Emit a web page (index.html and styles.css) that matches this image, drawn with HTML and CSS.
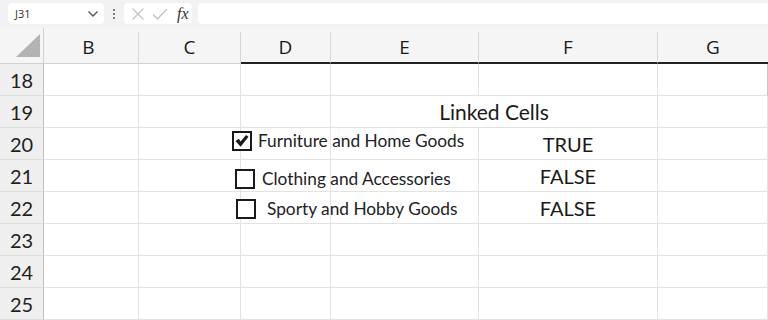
FILE: index.html
```html
<!DOCTYPE html>
<html>
<head>
<meta charset="utf-8">
<link rel="stylesheet" href="styles.css">
</head>
<body>
<div class="topbar">
  <div class="namebox"><span class="ref">J31</span>
    <svg class="chev" width="12" height="8" viewBox="0 0 12 8"><path d="M1.5 1.5 L6 6 L10.5 1.5" fill="none" stroke="#555" stroke-width="1.4"/></svg>
  </div>
  <div class="dots"><span></span><span></span><span></span></div>
  <div class="fbtns">
    <svg width="14" height="14" viewBox="0 0 14 14"><path d="M1.5 1.5 L12.5 12.5 M12.5 1.5 L1.5 12.5" stroke="#c4c4c4" stroke-width="1.3" fill="none"/></svg>
    <svg width="16" height="14" viewBox="0 0 16 14"><path d="M1 7.5 L5.5 12 L15 2" stroke="#c4c4c4" stroke-width="1.3" fill="none"/></svg>
    <span class="fx">fx</span>
  </div>
  <div class="finput"></div>
</div>
<div class="sheet">
  <div class="corner"><svg width="24" height="23" viewBox="0 0 24 23"><path d="M24 0 L24 23 L0 23 Z" fill="#b3b3b3"/></svg></div>
  <div class="ch chb">B</div>
  <div class="ch">C</div>
  <div class="ch sel">D</div>
  <div class="ch sel">E</div>
  <div class="ch sel">F</div>
  <div class="ch sel last">G</div>

  <div class="rh">18</div><div class="c"></div><div class="c"></div><div class="c"></div><div class="c"></div><div class="c"></div><div class="c"></div>
  <div class="rh">19</div><div class="c"></div><div class="c"></div><div class="c"></div><div class="c span2 txt">Linked Cells</div><div class="c"></div>
  <div class="rh">20</div><div class="c"></div><div class="c"></div><div class="c"></div><div class="c"></div><div class="c txt">TRUE</div><div class="c"></div>
  <div class="rh">21</div><div class="c"></div><div class="c"></div><div class="c"></div><div class="c"></div><div class="c txt">FALSE</div><div class="c"></div>
  <div class="rh">22</div><div class="c"></div><div class="c"></div><div class="c"></div><div class="c"></div><div class="c txt">FALSE</div><div class="c"></div>
  <div class="rh">23</div><div class="c"></div><div class="c"></div><div class="c"></div><div class="c"></div><div class="c"></div><div class="c"></div>
  <div class="rh">24</div><div class="c"></div><div class="c"></div><div class="c"></div><div class="c"></div><div class="c"></div><div class="c"></div>
  <div class="rh">25</div><div class="c"></div><div class="c"></div><div class="c"></div><div class="c"></div><div class="c"></div><div class="c"></div>

  <div class="ctrl ctrl1">
    <svg class="box" width="20" height="20" viewBox="0 0 20 20"><rect x="1" y="1" width="18" height="18" fill="#fff" stroke="#1a1a1a" stroke-width="2"/><path d="M3.5 10 L6.8 7.8 L8.6 10.6 L14 4 L16.5 5.8 L8.6 15.8 Z" fill="#1a1a1a"/></svg>
    <span class="lbl">Furniture and Home Goods</span>
  </div>
  <div class="ctrl ctrl2">
    <svg class="box" width="20" height="20" viewBox="0 0 20 20"><rect x="1" y="1" width="18" height="18" fill="#fff" stroke="#1a1a1a" stroke-width="2"/></svg>
    <span class="lbl">Clothing and Accessories</span>
  </div>
  <div class="ctrl ctrl3">
    <svg class="box" width="20" height="20" viewBox="0 0 20 20"><rect x="1" y="1" width="18" height="18" fill="#fff" stroke="#1a1a1a" stroke-width="2"/></svg>
    <span class="lbl">Sporty and Hobby Goods</span>
  </div>
</div>
</body>
</html>
```
FILE: styles.css
```css
html, body {
  margin: 0;
  padding: 0;
  width: 768px;
  height: 320px;
  overflow: hidden;
  background: #f2f2f2;
  font-family: Lato, "Open Sans", sans-serif;
  color: #1f1f1f;
}
.topbar {
  height: 28px;
  display: flex;
  align-items: center;
  padding-left: 8px;
  box-sizing: border-box;
  background: #f2f2f2;
}
.namebox {
  width: 96px;
  height: 21px;
  margin-top: -1px;
  background: #fff;
  border-radius: 4px;
  display: flex;
  align-items: center;
  justify-content: space-between;
  padding: 0 5px 0 7px;
  box-sizing: border-box;
}
.ref {
  font-family: "Open Sans", sans-serif;
  font-size: 11px;
  color: #333;
}
.dots {
  width: 20px;
  display: flex;
  flex-direction: column;
  align-items: center;
  gap: 2px;
}
.dots span {
  width: 2px;
  height: 2px;
  background: #555;
  border-radius: 1px;
}
.fbtns {
  width: 68px;
  height: 21px;
  margin-top: -1px;
  background: #fff;
  border-radius: 4px;
  display: flex;
  align-items: center;
  gap: 7px;
  padding-left: 7px;
  box-sizing: border-box;
}
.fx {
  font-family: "Liberation Serif", serif;
  font-style: italic;
  font-size: 16px;
  color: #333;
  margin-left: 2px;
}
.finput {
  flex: 1;
  height: 21px;
  margin-left: 6px;
  margin-top: -1px;
  background: #fff;
  border-radius: 4px 0 0 4px;
}
.sheet {
  position: relative;
  display: grid;
  grid-template-columns: 44px 95px 102px 90px 148px 179px 110px;
  grid-template-rows: 36px repeat(8, 32px);
  background: #f5f5f5;
}
.corner {
  display: flex;
  align-items: flex-end;
  justify-content: flex-end;
  padding: 0 3px 6px 0;
  border-right: 1px solid #d0d0d0;
  border-bottom: 1px solid #d0d0d0;
}
.ch {
  margin-top: 4px;
  border-right: 1px solid #d6d6d6;
  border-bottom: 1px solid #d0d0d0;
  display: flex;
  align-items: center;
  justify-content: center;
  font-family: "Open Sans", sans-serif;
  font-size: 19px;
  color: #1a1a1a;
  padding-bottom: 2px;
}
.chb { padding-right: 5px; }
.ch.sel {
  border-bottom: 2px solid #222;
  padding-bottom: 1px;
}
.ch.last { border-right: none; }
.rh {
  background: #efefef;
  border-right: 1px solid #c4c4c4;
  border-bottom: 1px solid #dcdcdc;
  display: flex;
  align-items: center;
  justify-content: center;
  font-size: 20px;
  color: #1f1f1f;
}
.c {
  background: #fff;
  border-right: 1px solid #e3e3e3;
  border-bottom: 1px solid #e3e3e3;
}
.c:nth-child(7n) { border-right: 1px solid #c8c8c8; }
.span2 { grid-column: span 2; }
.txt {
  display: flex;
  align-items: center;
  justify-content: center;
  font-size: 20px;
  color: #1a1a1a;
}
.span2.txt { font-size: 21px; }
.ctrl {
  position: absolute;
  display: flex;
  align-items: center;
  gap: 6px;
}
.box { flex: none; }
.lbl {
  font-size: 17.3px;
  color: #222;
  white-space: nowrap;
}
.ctrl1 { left: 232px; top: 102px; }
.ctrl2 { left: 235px; top: 140px; gap: 7px; }
.ctrl3 { left: 236px; top: 170px; gap: 11px; }
```
